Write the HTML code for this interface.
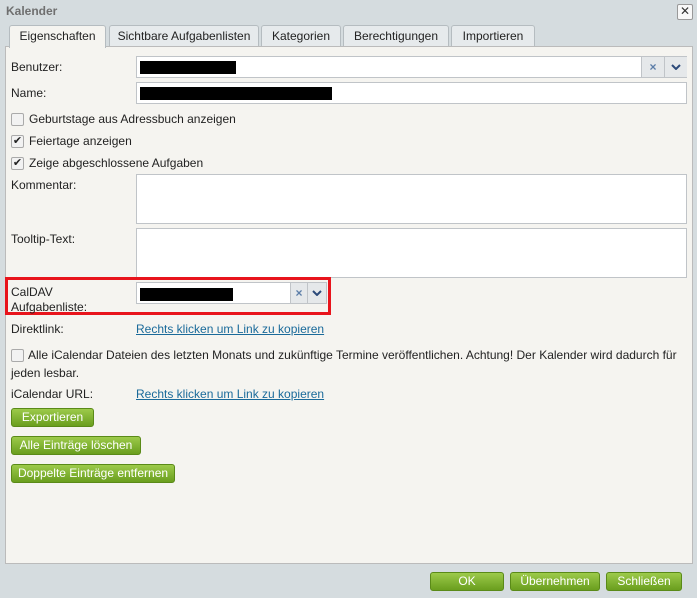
<!DOCTYPE html><html><head><style>
body{margin:0;width:697px;height:598px;background:#d5dcdf;font-family:"Liberation Sans",sans-serif;font-size:12px;color:#222;position:relative;overflow:hidden}
.a{position:absolute}
.title{left:6px;top:4px;font-weight:bold;color:#6f6f6f;font-size:12px}
.close{left:677px;top:4px;width:14px;height:14px;border:1px solid #999;background:#f8f8f8;border-radius:2px;font-size:12px;line-height:13px;text-align:center;color:#333}
.panel{left:5px;top:46px;width:686px;height:516px;background:#f5f4f0;border:1px solid #bbb}
.tab{top:25px;height:20px;background:#e6eaec;border:1px solid #b5bcc0;border-bottom:none;border-radius:3px 3px 0 0;text-align:center;line-height:20px;font-size:12px}
.inp{background:#fff;border:1px solid #c0c4c8;height:20px}
.blk{background:#000;height:13px}
.lbl{left:11px}
.cb{width:11px;height:11px;border:1px solid #aaa;border-radius:2px;background:#f2f2f2;left:11px}
.btn{height:17px;background:linear-gradient(#9cca4a,#6a9e1e);border:1px solid #5a8a18;border-radius:3px;color:#fff;text-align:center;line-height:17px;font-size:12px}
a{color:#1a6a9a;text-decoration:underline}
.btns{width:22px;height:20px;background:#e5e8ea;border-left:1px solid #c0c4c8;color:#5b7da8;text-align:center;line-height:20px;font-weight:bold}
.btns svg{position:absolute;left:50%;top:50%;margin:-3px 0 0 -5px}
</style></head><body>
<div class="a title">Kalender</div>
<div class="a close">✕</div>
<div class="a panel"></div>
<div class="a tab" style="left:9px;width:95px;background:#f5f4f0;height:22px">Eigenschaften</div>
<div class="a tab" style="left:109px;width:148px">Sichtbare Aufgabenlisten</div>
<div class="a tab" style="left:261px;width:78px">Kategorien</div>
<div class="a tab" style="left:343px;width:104px">Berechtigungen</div>
<div class="a tab" style="left:451px;width:82px">Importieren</div>
<div class="a lbl" style="top:60px">Benutzer:</div>
<div class="a inp" style="left:136px;top:56px;width:549px"><div class="a blk" style="left:3px;top:4px;width:96px"></div><div class="a btns" style="left:504px;top:0">×</div><div class="a btns" style="left:527px;top:0"><svg width="10" height="6"><path d="M1 1L5 5L9 1" stroke="#2c4a7a" stroke-width="2" fill="none"/></svg></div></div>
<div class="a lbl" style="top:86px">Name:</div>
<div class="a inp" style="left:136px;top:82px;width:549px"><div class="a blk" style="left:3px;top:4px;width:192px"></div></div>
<div class="a cb" style="top:113px"></div><div class="a" style="left:29px;top:112px">Geburtstage aus Adressbuch anzeigen</div>
<div class="a cb" style="top:135px;font-size:11px;line-height:11px;text-align:center">✔</div><div class="a" style="left:29px;top:134px">Feiertage anzeigen</div>
<div class="a cb" style="top:157px;font-size:11px;line-height:11px;text-align:center">✔</div><div class="a" style="left:29px;top:156px">Zeige abgeschlossene Aufgaben</div>
<div class="a lbl" style="top:178px">Kommentar:</div>
<div class="a inp" style="left:136px;top:174px;width:549px;height:48px"></div>
<div class="a lbl" style="top:232px">Tooltip-Text:</div>
<div class="a inp" style="left:136px;top:228px;width:549px;height:48px"></div>
<div class="a" style="left:5px;top:277px;width:320px;height:32px;border:3px solid #e8141c"></div>
<div class="a lbl" style="top:285px;line-height:15px">CalDAV<br>Aufgabenliste:</div>
<div class="a inp" style="left:136px;top:282px;width:189px"><div class="a blk" style="left:3px;top:5px;width:93px"></div><div class="a btns" style="left:153px;top:0;width:16px">×</div><div class="a btns" style="left:170px;top:0;width:18px"><svg width="10" height="6"><path d="M1 1L5 5L9 1" stroke="#2c4a7a" stroke-width="2" fill="none"/></svg></div></div>
<div class="a lbl" style="top:322px">Direktlink:</div>
<div class="a" style="left:136px;top:322px"><a>Rechts klicken um Link zu kopieren</a></div>
<div class="a cb" style="top:349px"></div><div class="a" style="left:28px;top:348px">Alle iCalendar Dateien des letzten Monats und zukünftige Termine veröffentlichen. Achtung! Der Kalender wird dadurch für</div>
<div class="a lbl" style="top:366px">jeden lesbar.</div>
<div class="a lbl" style="top:387px">iCalendar URL:</div>
<div class="a" style="left:136px;top:387px"><a>Rechts klicken um Link zu kopieren</a></div>
<div class="a btn" style="left:11px;top:408px;width:81px">Exportieren</div>
<div class="a btn" style="left:11px;top:436px;width:128px">Alle Einträge löschen</div>
<div class="a btn" style="left:11px;top:464px;width:162px">Doppelte Einträge entfernen</div>
<div class="a btn" style="left:430px;top:572px;width:72px">OK</div>
<div class="a btn" style="left:510px;top:572px;width:88px">Übernehmen</div>
<div class="a btn" style="left:606px;top:572px;width:74px">Schließen</div>
</body></html>
